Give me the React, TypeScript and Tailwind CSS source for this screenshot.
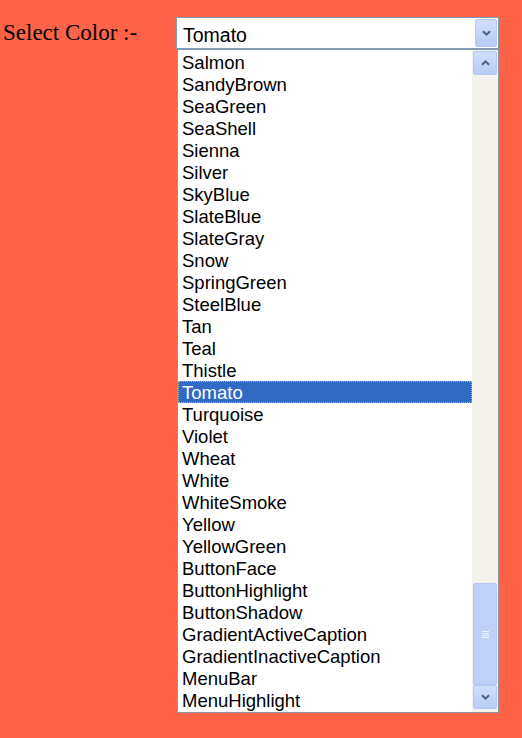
const colors = [
  "Salmon",
  "SandyBrown",
  "SeaGreen",
  "SeaShell",
  "Sienna",
  "Silver",
  "SkyBlue",
  "SlateBlue",
  "SlateGray",
  "Snow",
  "SpringGreen",
  "SteelBlue",
  "Tan",
  "Teal",
  "Thistle",
  "Tomato",
  "Turquoise",
  "Violet",
  "Wheat",
  "White",
  "WhiteSmoke",
  "Yellow",
  "YellowGreen",
  "ButtonFace",
  "ButtonHighlight",
  "ButtonShadow",
  "GradientActiveCaption",
  "GradientInactiveCaption",
  "MenuBar",
  "MenuHighlight",
];

const selected = "Tomato";

function Chevron({ up = false }: { up?: boolean }) {
  return (
    <svg width="9" height="6" viewBox="0 0 9 6" className={up ? "rotate-180" : ""}>
      <path d="M1 1.2 L4.5 4.6 L8 1.2" fill="none" stroke="#4d6185" strokeWidth="2" />
    </svg>
  );
}

function ScrollButton({ up = false }: { up?: boolean }) {
  return (
    <div className="h-[24px] flex items-center justify-center rounded-[2px] border border-[#b4c8f6] bg-gradient-to-b from-[#d2defc] to-[#b9cbf7]">
      <Chevron up={up} />
    </div>
  );
}

export default function App() {
  return (
    <main className="min-h-screen bg-[#ff6347] flex pl-[3px] pt-[17px]">
      <label className="w-[173px] mt-[3px] text-[23px] leading-[26px] text-black font-['Liberation_Serif',serif]">
        Select Color :-
      </label>

      <div className="flex flex-col w-[323px] font-['Liberation_Sans',Arial,sans-serif] text-black">
        {/* closed select */}
        <div className="h-[32px] flex bg-white border border-[#7f9db9]">
          <span className="flex-1 pl-[6px] pt-[6px] text-[19.5px] leading-[22px]">{selected}</span>
          <div className="w-[22px] mt-px mb-px mr-px flex items-center justify-center rounded-[2px] border border-[#b4c8f6] bg-gradient-to-b from-[#d2defc] to-[#b9cbf7]">
            <Chevron />
          </div>
        </div>

        {/* open option list */}
        <div className="ml-px h-[664px] flex bg-white border border-[#8c98a8]">
          <ul className="flex-1 pt-px">
            {colors.map((c) => (
              <li
                key={c}
                className={
                  c === selected
                    ? "h-[22px] pl-[4px] text-[18.5px] leading-[23px] bg-[#316ac5] text-white outline-1 outline-dotted outline-[#c8b878] -outline-offset-1"
                    : "h-[22px] pl-[4px] text-[18.5px] leading-[23px]"
                }
              >
                {c}
              </li>
            ))}
          </ul>

          {/* scrollbar */}
          <div className="w-[26px] flex flex-col px-px pt-px pb-[3px] bg-[#f4f2ec]">
            <ScrollButton up />
            <div className="flex-1" />
            <div className="h-[102px] flex items-center justify-center rounded-[2px] border border-[#b4c8f6] bg-[#c1d0fa]">
              <div className="flex flex-col gap-[1px]">
                <div className="w-[7px] h-px bg-[#eef3ff]" />
                <div className="w-[7px] h-px bg-[#eef3ff]" />
                <div className="w-[7px] h-px bg-[#eef3ff]" />
                <div className="w-[7px] h-px bg-[#eef3ff]" />
              </div>
            </div>
            <ScrollButton />
          </div>
        </div>
      </div>
    </main>
  );
}
